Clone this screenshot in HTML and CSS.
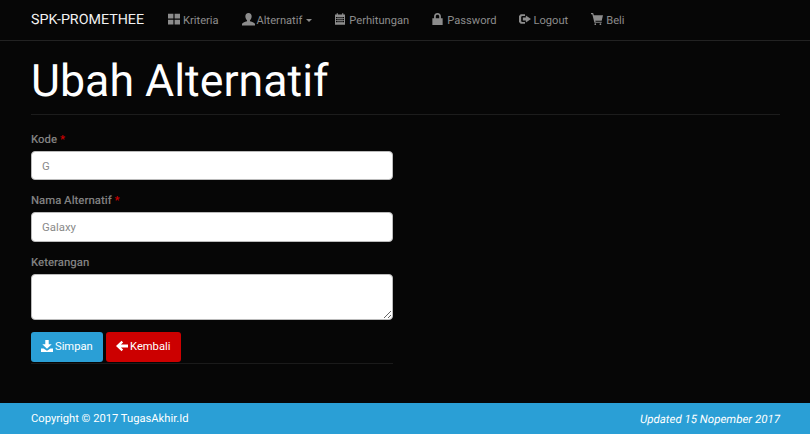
FILE: index.html
```html
<!DOCTYPE html>
<html lang="id">
<head>
<meta charset="utf-8">
<title>Ubah Alternatif</title>
<link rel="stylesheet" href="styles.css">
</head>
<body>
<nav class="navbar">
  <a class="brand">SPK-PROMETHEE</a>
  <a class="nav-link"><svg class="icon" viewBox="0 0 14 14"><path d="M0 1h6.300v5.500H0zM7.700 1H14v5.500H7.700zM0 8h6.300v5.500H0zM7.700 8H14v5.500H7.700z"/></svg>Kriteria</a>
  <a class="nav-link"><svg class="icon icon-user" viewBox="0 0 14 14"><path d="M7 0c2.200 0 3.400 1.500 3.400 3.600 0 1.800-.8 3.300-1.800 4.100v1.100c2.500.7 5.400 1.600 5.400 3V13.500H0V11.800c0-1.400 2.900-2.300 5.400-3V7.700C4.400 6.900 3.600 5.400 3.600 3.600 3.600 1.500 4.800 0 7 0z"/></svg>Alternatif<span class="caret"></span></a>
  <a class="nav-link"><svg class="icon icon-cal" viewBox="0 0 12 14"><path fill-rule="evenodd" d="M2 0h1.500v1.500h5V0H10v1.500h2V14H0V1.500h2zM1.200 4.500V6h2V4.500zM4 4.500V6h1.600V4.500zM6.400 4.500V6H8V4.500zM8.800 4.500V6h2V4.500zM1.200 7v1.500h2V7zM4 7v1.500h1.600V7zM6.400 7v1.500H8V7zM8.800 7v1.500h2V7zM1.200 9.500V11h2V9.500zM4 9.500V11h1.600V9.500zM6.400 9.500V11H8V9.500zM8.800 9.500V11h2V9.500z"/></svg>Perhitungan</a>
  <a class="nav-link"><svg class="icon icon-lock" viewBox="0 0 12 14"><path fill-rule="evenodd" d="M6 0c2.500 0 4 1.700 4 4v2h2v8H0V6h2V4c0-2.300 1.500-4 4-4zM6 2C4.700 2 4 2.800 4 4v2h4V4c0-1.200-.7-2-2-2z"/></svg>Password</a>
  <a class="nav-link"><svg class="icon icon-out" viewBox="0 0 14 14"><path d="M2 1.500H7v2H3.500L2.500 4.500v5l1 1H7v2H2L0 10.500v-7zM8 3 14 7l-6 4V8.700H4.500V5.300H8z"/></svg>Logout</a>
  <a class="nav-link"><svg class="icon icon-cart" viewBox="0 0 14 14"><path d="M0 0h2.500l.8 2.500H14l-1.500 6.500H5l.4 1.200H12.500V11.500H4L1.500 1.500H0z"/><circle cx="5" cy="13" r="1"/><circle cx="11" cy="13" r="1"/></svg>Beli</a>
</nav>

<main class="content">
  <h1 class="page-title">Ubah Alternatif</h1>
  <form class="form">
    <div class="field">
      <label class="label" for="kode">Kode <span class="req">*</span></label>
      <input class="control" id="kode" type="text" placeholder="G">
    </div>
    <div class="field">
      <label class="label" for="nama">Nama Alternatif <span class="req">*</span></label>
      <input class="control" id="nama" type="text" placeholder="Galaxy">
    </div>
    <div class="field">
      <label class="label" for="ket">Keterangan</label>
      <textarea class="control area" id="ket"></textarea>
    </div>
    <div class="actions">
      <button class="btn btn-blue" type="button"><svg class="btn-icon" viewBox="0 0 14 14"><path d="M5 0h4v5h3.500L7 10.300 1.500 5H5zM0 10h3l4 2.500L11 10h3v4H0z"/></svg>Simpan</button>
      <button class="btn btn-red" type="button"><svg class="btn-icon" viewBox="0 0 14 14"><path d="M6.500 1 8.300 2.800 5.800 5.300H14v3.400H5.800L8.300 11.200 6.500 13 0 7z"/></svg>Kembali</button>
    </div>
  </form>
</main>

<footer class="footer">
  <span class="copy">Copyright © 2017 TugasAkhir.Id</span>
  <em class="updated">Updated 15 Nopember 2017</em>
</footer>
</body>
</html>
```
FILE: styles.css
```css
* { box-sizing: border-box; }
html, body { height: 100%; }
body {
  margin: 0;
  height: 434px;
  overflow: hidden;
  display: flex;
  flex-direction: column;
  background: #060606;
  color: #fff;
  font-family: Roboto, "Liberation Sans", sans-serif;
  font-size: 11.4px;
  text-rendering: geometricPrecision;
}
.navbar {
  flex: none;
  height: 41px;
  display: flex;
  align-items: center;
  padding-left: 31px;
  border-bottom: 1px solid #222;
}
.brand {
  font-size: 14.25px;
  color: #f2f2f2;
  margin-right: 24px;
}
.nav-link {
  display: flex;
  align-items: center;
  color: #8c8c8c;
  font-size: 11.15px;
  margin-right: 23px;
}
.icon { width: 12px; height: 12px; fill: #8c8c8c; margin-right: 3px; margin-top: -2px; }
.icon-user { width: 13px; height: 13px; margin-right: 2px; }
.icon-cal { width: 10px; margin-right: 4px; }
.icon-lock { width: 11px; margin-right: 4px; }
.icon-out { margin-right: 2px; }
.icon-cart { margin-right: 3px; }
.caret {
  width: 0;
  height: 0;
  margin-left: 4px;
  border-left: 3px solid transparent;
  border-right: 3px solid transparent;
  border-top: 3px solid #8c8c8c;
}
.content {
  flex: 1;
  padding: 0 30px 0 31px;
}
.page-title {
  margin: 0;
  height: 74px;
  font-size: 44.7px;
  line-height: 80px;
  font-weight: 400;
  color: #fff;
  border-bottom: 1px solid #1c1c1c;
}
.form {
  width: 362px;
  padding-top: 15.75px;
}
.field { margin-bottom: 12px; }
.label {
  display: block;
  height: 20px;
  line-height: 16px;
  font-weight: 500;
  font-size: 11.4px;
  color: #808080;
}
.req { color: #c00; }
.control {
  display: block;
  width: 100%;
  height: 29.5px;
  padding: 0 10px;
  background: #fff;
  border: 1px solid #bbb;
  border-radius: 4px;
  font-family: Roboto, "Liberation Sans", sans-serif;
  font-size: 11.4px;
  margin: 0;
}
.control::placeholder { color: #8a8a8a; opacity: 1; }
.area { height: 46px; }
.actions {
  display: flex;
  gap: 3px;
  height: 32px;
  border-bottom: 1px solid #1a1a1a;
}
.btn {
  height: 30px;
  display: flex;
  align-items: center;
  border: 0;
  border-radius: 3px;
  color: #fff;
  font-family: Roboto, "Liberation Sans", sans-serif;
  font-size: 11.2px;
}
.btn-blue { width: 72px; padding: 0 0 0 10px; background: #2a9fd6; }
.btn-red { width: 75px; padding: 0 0 0 10px; background: #c00; }
.btn-icon { width: 12px; height: 12px; fill: #fff; margin-right: 2px; margin-top: -1px; }
.footer {
  flex: none;
  height: 31px;
  display: flex;
  align-items: center;
  justify-content: space-between;
  padding: 0 30px 0 31px;
  background: #2a9fd6;
  color: #fff;
}
.copy { font-size: 11.2px; }
.updated { font-size: 11.5px; }
```
